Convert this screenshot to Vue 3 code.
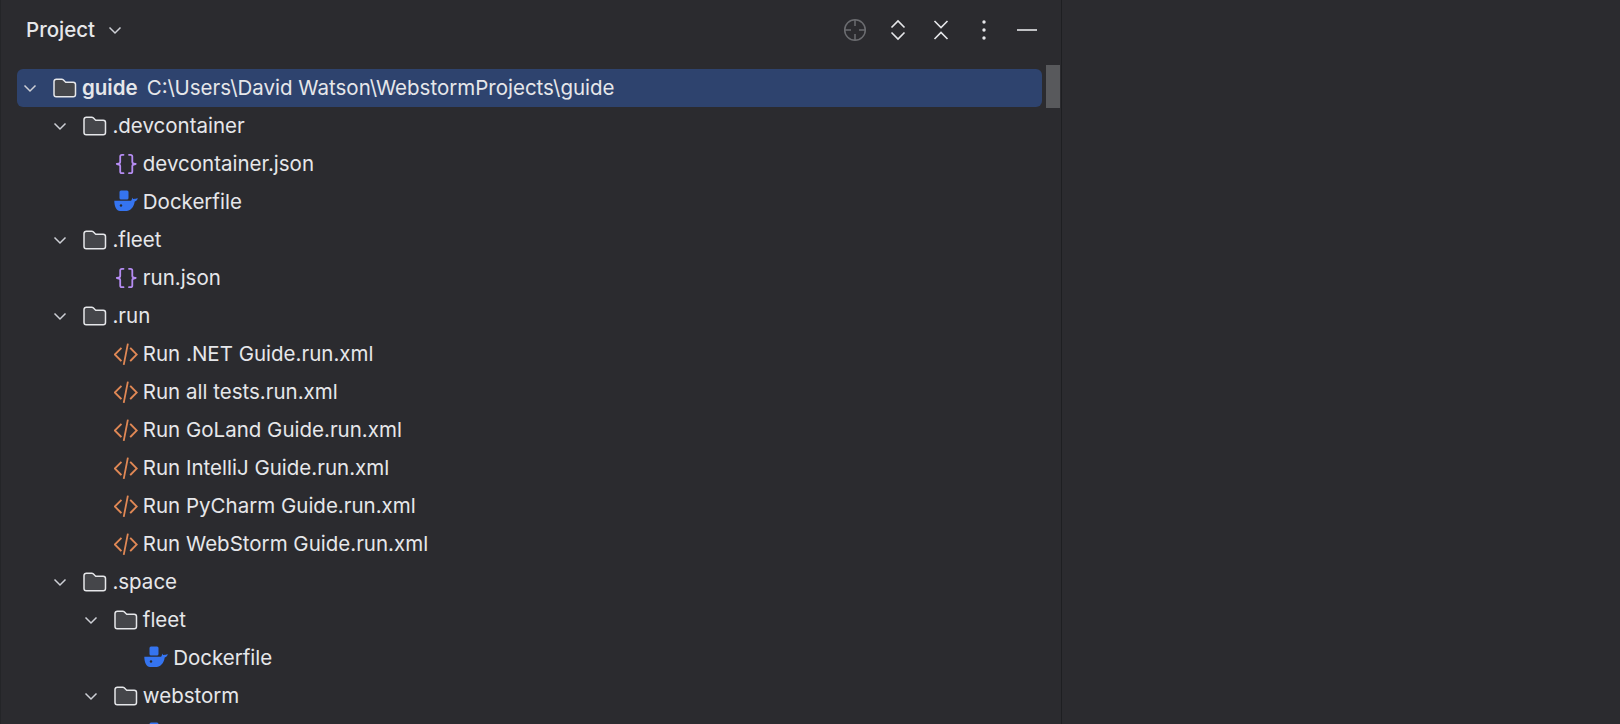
<script setup>
const rows = [
  { d: 0, t: 'folder', n: 'guide', path: 'C:\\Users\\David Watson\\WebstormProjects\\guide', sel: true },
  { d: 1, t: 'folder', n: '.devcontainer' },
  { d: 2, t: 'json', n: 'devcontainer.json' },
  { d: 2, t: 'docker', n: 'Dockerfile' },
  { d: 1, t: 'folder', n: '.fleet' },
  { d: 2, t: 'json', n: 'run.json' },
  { d: 1, t: 'folder', n: '.run' },
  { d: 2, t: 'xml', n: 'Run .NET Guide.run.xml' },
  { d: 2, t: 'xml', n: 'Run all tests.run.xml' },
  { d: 2, t: 'xml', n: 'Run GoLand Guide.run.xml' },
  { d: 2, t: 'xml', n: 'Run IntelliJ Guide.run.xml' },
  { d: 2, t: 'xml', n: 'Run PyCharm Guide.run.xml' },
  { d: 2, t: 'xml', n: 'Run WebStorm Guide.run.xml' },
  { d: 1, t: 'folder', n: '.space' },
  { d: 2, t: 'folder', n: 'fleet' },
  { d: 3, t: 'docker', n: 'Dockerfile' },
  { d: 2, t: 'folder', n: 'webstorm' },
  { d: 3, t: 'docker', n: '' },
]
const indent = (r) => ({ paddingLeft: 21 + r.d * 30.4 + 'px' })
</script>

<template>
  <div class="page">
    <section class="panel">
      <header class="bar">
        <span class="title">Project</span>
        <svg class="title-chev" width="16" height="16" viewBox="0 0 16 16" fill="none"><path d="M2.500 5.500 8 11l5.500-5.500" stroke="#ced0d6" stroke-width="1.500"/></svg>
        <div class="tools">
          <svg width="24" height="24" viewBox="0 0 24 24" fill="none" stroke="#6b6c70" stroke-width="1.500"><circle cx="12" cy="12" r="10.300"/><path d="M12 1.700v6.300M12 16v6.300M1.700 12H8M16 12h6.300"/></svg>
          <svg width="24" height="24" viewBox="0 0 24 24" fill="none" stroke="#e6e7ea" stroke-width="1.600"><path d="M5.500 9.500 12 3l6.500 6.500M5.500 14.500 12 21l6.500-6.500"/></svg>
          <svg width="24" height="24" viewBox="0 0 24 24" fill="none" stroke="#e6e7ea" stroke-width="1.600"><path d="M5.500 3 12 9.500 18.500 3M5.500 21 12 14.500 18.500 21"/></svg>
          <svg width="24" height="24" viewBox="0 0 24 24" fill="#e6e7ea"><circle cx="12" cy="4" r="1.700"/><circle cx="12" cy="12" r="1.700"/><circle cx="12" cy="20" r="1.700"/></svg>
          <svg width="24" height="24" viewBox="0 0 24 24" fill="none" stroke="#e6e7ea" stroke-width="1.600"><path d="M2 12h20"/></svg>
        </div>
      </header>

      <div class="tree">
        <div v-for="(r, i) in rows" :key="i" class="row" :class="{ sel: r.sel }" :style="indent(r)">
          <span class="arrow">
            <svg v-if="r.t === 'folder'" width="16" height="16" viewBox="0 0 16 16" fill="none"><path d="M2.500 5.500 8 11l5.500-5.500" stroke="#ced0d6" stroke-width="1.500"/></svg>
          </span>
          <svg v-if="r.t === 'folder'" class="icon" width="24" height="24" viewBox="0 0 24 24">
            <path d="M1 5.500A2.300 2.300 0 0 1 3.300 3.200h5.400c.6 0 1.100.2 1.500.6l2.500 2.400h7.500a2.300 2.300 0 0 1 2.300 2.300v10a2.300 2.300 0 0 1-2.300 2.300H3.300A2.300 2.300 0 0 1 1 18.500z" fill="#45464a" stroke="#e6e7ea" stroke-width="1.500" stroke-linejoin="round"/>
          </svg>
          <svg v-else-if="r.t === 'json'" class="icon" width="24" height="24" viewBox="0 0 24 24" fill="none" stroke="#b58cf2" stroke-width="1.800" stroke-linecap="round" stroke-linejoin="round">
            <path d="M9.500 2.800H8A1.800 1.800 0 0 0 6.200 4.600v5.300c0 1.100-.7 1.800-3.400 2.100 2.700.3 3.400 1 3.400 2.100v5.300A1.800 1.800 0 0 0 8 21.200h1.500"/>
            <path d="M15 2.800h1.500a1.800 1.800 0 0 1 1.800 1.800v5.300c0 1.100.7 1.800 3.400 2.100-2.700.3-3.400 1-3.400 2.100v5.300a1.800 1.800 0 0 1-1.800 1.800H15"/>
          </svg>
          <svg v-else-if="r.t === 'docker'" class="icon" width="24" height="24" viewBox="0 0 24 24">
            <rect x="5.500" y=".5" width="9" height="9" rx="1.500" fill="#3574f0"/>
            <path d="M.3 10.800H16.300c.8 0 1.300-.6 1.500-1.300l.4-2c.4 1 1 1.500 1.800 1.500.9 0 2-.2 3.700-.9-.1 1.900-1.300 3-3 3.300C19.800 17.500 16.500 21 11 21H6C2.500 21 .3 16.500.3 10.800z" fill="#3574f0"/>
            <circle cx="7" cy="15.500" r="1.200" fill="#2b2b2f"/>
          </svg>
          <svg v-else class="icon" width="24" height="24" viewBox="0 0 24 24" fill="none" stroke="#e08855" stroke-width="1.800" stroke-linecap="square">
            <path d="M6.800 6.500 .8 12.500l6 6M16.800 6.500l6 6-6 6M13.700 2.500 9.900 22"/>
          </svg>
          <span v-if="r.n" class="name" :class="{ bold: r.sel }">{{ r.n }}</span>
          <span v-if="r.path" class="path">{{ r.path }}</span>
        </div>
        <div class="thumb"></div>
      </div>
    </section>
    <aside class="rest"></aside>
  </div>
</template>

<style scoped>
.page {
  display: flex;
  width: 1620px;
  height: 724px;
  overflow: hidden;
  background: #2b2b2f;
  font-family: Inter, "Noto Sans", sans-serif;
  color: #e6e7ea;
}
.panel {
  width: 1062px;
  flex: none;
  border-right: 1px solid #1e1f22;
  border-left: 1px solid #242528;
  box-sizing: border-box;
  display: flex;
  flex-direction: column;
}
.rest { flex: 1; }
.bar {
  height: 60px;
  flex: none;
  display: flex;
  align-items: center;
  padding: 0 22px 0 25px;
}
.title { font-size: 20.5px; font-weight: 500; padding-bottom: 2px; }
.title-chev { margin-left: 12px; }
.tools {
  margin-left: auto;
  display: flex;
  align-items: center;
  gap: 19px;
}
.tree {
  position: relative;
  flex: 1;
  padding: 9px 19px 0 16px;
  overflow: hidden;
}
.row {
  height: 38px;
  display: flex;
  align-items: center;
  box-sizing: border-box;
  font-size: 20.5px;
  white-space: nowrap;
  border-radius: 6px;
}
.sel { background: #2e436e; }
.arrow {
  width: 16px;
  height: 16px;
  margin-left: -16px;
  margin-right: 15px;
  flex: none;
  display: flex;
}
.icon { flex: none; margin-right: 5px; }
.name, .path { padding-bottom: 2px; }
.bold { font-weight: 600; }
.path { margin-left: 9px; }
.thumb {
  position: absolute;
  top: 5px;
  right: 1px;
  width: 14px;
  height: 43px;
  background: #58595c;
}
</style>
